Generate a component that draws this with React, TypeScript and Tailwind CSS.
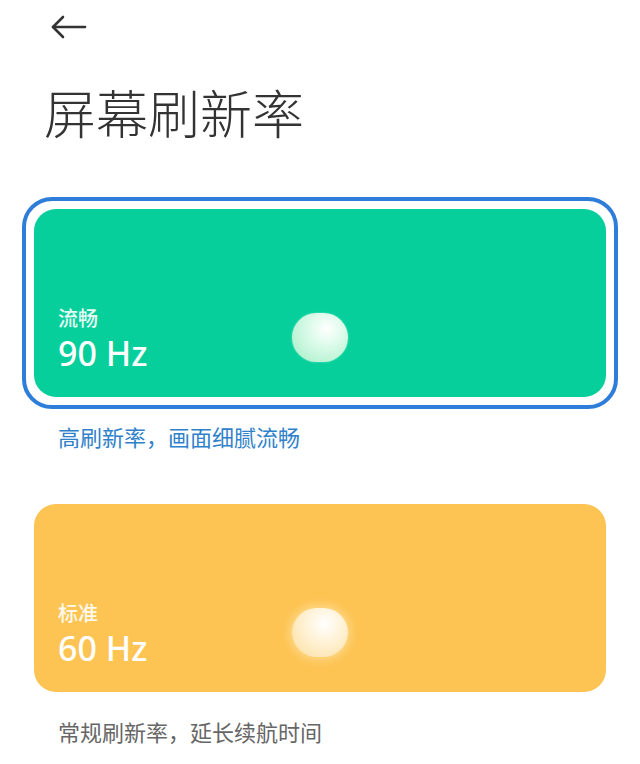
import { useState } from 'react';

type Mode = {
  key: string;
  label: string;
  hz: string;
  desc: string;
  card: string;
  ball: string;
};

const modes: Mode[] = [
  {
    key: '90',
    label: '流畅',
    hz: '90 Hz',
    desc: '高刷新率，画面细腻流畅',
    card: 'bg-[#06cf9c]',
    ball: 'bg-[radial-gradient(ellipse_at_62%_32%,#ffffff_0%,#e2fcee_30%,#bdf4d6_70%,#a9eec8_100%)] shadow-[0_0_2px_rgba(210,255,235,0.6)]',
  },
  {
    key: '60',
    label: '标准',
    hz: '60 Hz',
    desc: '常规刷新率，延长续航时间',
    card: 'bg-[#fdc453]',
    ball: 'bg-[radial-gradient(ellipse_at_58%_32%,#ffffff_0%,#fff4dc_35%,#fde6b4_75%,#fcd992_100%)] shadow-[0_0_8px_3px_rgba(255,228,170,0.6)]',
  },
];

function BackArrow() {
  return (
    <svg width="36" height="24" viewBox="0 0 36 24" fill="none" stroke="#333" strokeWidth="2.6" strokeLinecap="round" strokeLinejoin="round">
      <path d="M2 12H34" />
      <path d="M12 2L2 12L12 22" />
    </svg>
  );
}

export default function App() {
  const [sel, setSel] = useState('90');

  return (
    <div className="min-h-[764px] w-[640px] bg-white font-['Noto_Sans','Noto_Sans_CJK_SC',sans-serif]">
      <div className="px-[51px] pt-[15px]">
        <button aria-label="返回" className="block">
          <BackArrow />
        </button>
      </div>

      <h1 className="mt-[44px] px-[44px] text-[52px] font-light leading-[62px] text-[#333]">屏幕刷新率</h1>

      <div className="mt-[52px] px-[22px]">
        {modes.map((m, i) => {
          const on = sel === m.key;
          return (
            <div key={m.key} className={i > 0 ? 'mt-[40px]' : ''}>
              <button
                onClick={() => setSel(m.key)}
                className={`block w-full rounded-[30px] border-4 p-2 text-left ${on ? 'border-[#2e7dd8]' : 'border-transparent'}`}
              >
                <div className={`relative flex h-[188px] flex-col justify-end rounded-[22px] px-6 pb-6 ${m.card}`}>
                  <span className="text-[20px] font-medium leading-[28px] text-white/90">{m.label}</span>
                  <span className="text-[34px] font-medium leading-[40px] text-white">{m.hz}</span>
                  <span className={`absolute left-1/2 top-[104px] h-[49px] w-[56px] -translate-x-1/2 rounded-full ${m.ball}`} />
                </div>
              </button>
              <p className={`mt-[13px] px-9 text-[22px] leading-[30px] ${on ? 'text-[#2f82c9]' : 'text-[#666]'}`}>{m.desc}</p>
            </div>
          );
        })}
      </div>
    </div>
  );
}
